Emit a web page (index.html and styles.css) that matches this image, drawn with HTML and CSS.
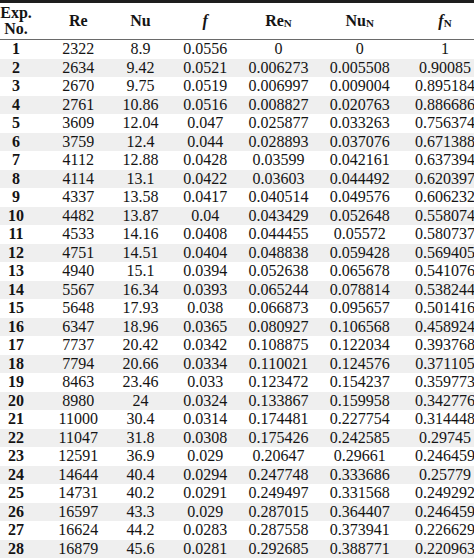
FILE: index.html
```html
<!DOCTYPE html>
<html>
<head>
<meta charset="utf-8">
<link rel="stylesheet" href="styles.css">
</head>
<body>
<table class="data">
<colgroup>
<col class="c1"><col class="c2"><col class="c3"><col class="c4"><col class="c5"><col class="c6"><col class="c7">
</colgroup>
<thead>
<tr>
<th>Exp.<br>No.</th><th>Re</th><th>Nu</th><th><i>f</i></th><th>Re<span class="sub">N</span></th><th>Nu<span class="sub">N</span></th><th><i>f</i><span class="sub">N</span></th>
</tr>
</thead>
<tbody>
<tr><td>1</td><td>2322</td><td>8.9</td><td>0.0556</td><td>0</td><td>0</td><td>1</td></tr>
<tr><td>2</td><td>2634</td><td>9.42</td><td>0.0521</td><td>0.006273</td><td>0.005508</td><td>0.90085</td></tr>
<tr><td>3</td><td>2670</td><td>9.75</td><td>0.0519</td><td>0.006997</td><td>0.009004</td><td>0.895184</td></tr>
<tr><td>4</td><td>2761</td><td>10.86</td><td>0.0516</td><td>0.008827</td><td>0.020763</td><td>0.886686</td></tr>
<tr><td>5</td><td>3609</td><td>12.04</td><td>0.047</td><td>0.025877</td><td>0.033263</td><td>0.756374</td></tr>
<tr><td>6</td><td>3759</td><td>12.4</td><td>0.044</td><td>0.028893</td><td>0.037076</td><td>0.671388</td></tr>
<tr><td>7</td><td>4112</td><td>12.88</td><td>0.0428</td><td>0.03599</td><td>0.042161</td><td>0.637394</td></tr>
<tr><td>8</td><td>4114</td><td>13.1</td><td>0.0422</td><td>0.03603</td><td>0.044492</td><td>0.620397</td></tr>
<tr><td>9</td><td>4337</td><td>13.58</td><td>0.0417</td><td>0.040514</td><td>0.049576</td><td>0.606232</td></tr>
<tr><td>10</td><td>4482</td><td>13.87</td><td>0.04</td><td>0.043429</td><td>0.052648</td><td>0.558074</td></tr>
<tr><td>11</td><td>4533</td><td>14.16</td><td>0.0408</td><td>0.044455</td><td>0.05572</td><td>0.580737</td></tr>
<tr><td>12</td><td>4751</td><td>14.51</td><td>0.0404</td><td>0.048838</td><td>0.059428</td><td>0.569405</td></tr>
<tr><td>13</td><td>4940</td><td>15.1</td><td>0.0394</td><td>0.052638</td><td>0.065678</td><td>0.541076</td></tr>
<tr><td>14</td><td>5567</td><td>16.34</td><td>0.0393</td><td>0.065244</td><td>0.078814</td><td>0.538244</td></tr>
<tr><td>15</td><td>5648</td><td>17.93</td><td>0.038</td><td>0.066873</td><td>0.095657</td><td>0.501416</td></tr>
<tr><td>16</td><td>6347</td><td>18.96</td><td>0.0365</td><td>0.080927</td><td>0.106568</td><td>0.458924</td></tr>
<tr><td>17</td><td>7737</td><td>20.42</td><td>0.0342</td><td>0.108875</td><td>0.122034</td><td>0.393768</td></tr>
<tr><td>18</td><td>7794</td><td>20.66</td><td>0.0334</td><td>0.110021</td><td>0.124576</td><td>0.371105</td></tr>
<tr><td>19</td><td>8463</td><td>23.46</td><td>0.033</td><td>0.123472</td><td>0.154237</td><td>0.359773</td></tr>
<tr><td>20</td><td>8980</td><td>24</td><td>0.0324</td><td>0.133867</td><td>0.159958</td><td>0.342776</td></tr>
<tr><td>21</td><td>11000</td><td>30.4</td><td>0.0314</td><td>0.174481</td><td>0.227754</td><td>0.314448</td></tr>
<tr><td>22</td><td>11047</td><td>31.8</td><td>0.0308</td><td>0.175426</td><td>0.242585</td><td>0.29745</td></tr>
<tr><td>23</td><td>12591</td><td>36.9</td><td>0.029</td><td>0.20647</td><td>0.29661</td><td>0.246459</td></tr>
<tr><td>24</td><td>14644</td><td>40.4</td><td>0.0294</td><td>0.247748</td><td>0.333686</td><td>0.25779</td></tr>
<tr><td>25</td><td>14731</td><td>40.2</td><td>0.0291</td><td>0.249497</td><td>0.331568</td><td>0.249292</td></tr>
<tr><td>26</td><td>16597</td><td>43.3</td><td>0.029</td><td>0.287015</td><td>0.364407</td><td>0.246459</td></tr>
<tr><td>27</td><td>16624</td><td>44.2</td><td>0.0283</td><td>0.287558</td><td>0.373941</td><td>0.226629</td></tr>
<tr><td>28</td><td>16879</td><td>45.6</td><td>0.0281</td><td>0.292685</td><td>0.388771</td><td>0.220963</td></tr>
</tbody>
</table>
</body>
</html>
```
FILE: styles.css
```css
html, body {
  margin: 0;
  padding: 0;
  background: #ffffff;
  overflow: hidden;
}
body {
  width: 474px;
  height: 559px;
}
.data {
  margin-left: -15px;
  width: 503.5px;
  table-layout: fixed;
  border-collapse: collapse;
  border-spacing: 0;
  font-family: "Liberation Serif", "Times New Roman", serif;
  font-size: 16px;
  color: #141414;
}
.c1 { width: 62px; }
.c2 { width: 62.5px; }
.c3 { width: 62px; }
.c4 { width: 67.5px; }
.c5 { width: 79px; }
.c6 { width: 83.5px; }
.c7 { width: 87px; }
.data th {
  font-weight: bold;
  text-align: center;
  vertical-align: middle;
  height: 36px;
  padding: 0;
  line-height: 16px;
  border-top: 3px solid #1e1e1e;
  border-bottom: 1px solid #6a6a6a;
  white-space: nowrap;
}
.data th i {
  font-style: italic;
}
.sub {
  font-size: 11px;
  position: relative;
  top: 1px;
}
.data td {
  height: 18.5px;
  padding: 0;
  line-height: 18.5px;
  text-align: center;
  white-space: nowrap;
  overflow: hidden;
}
.data td:first-child {
  font-weight: bold;
}
.data tbody tr:nth-child(even) td {
  background: #efefef;
}
```
